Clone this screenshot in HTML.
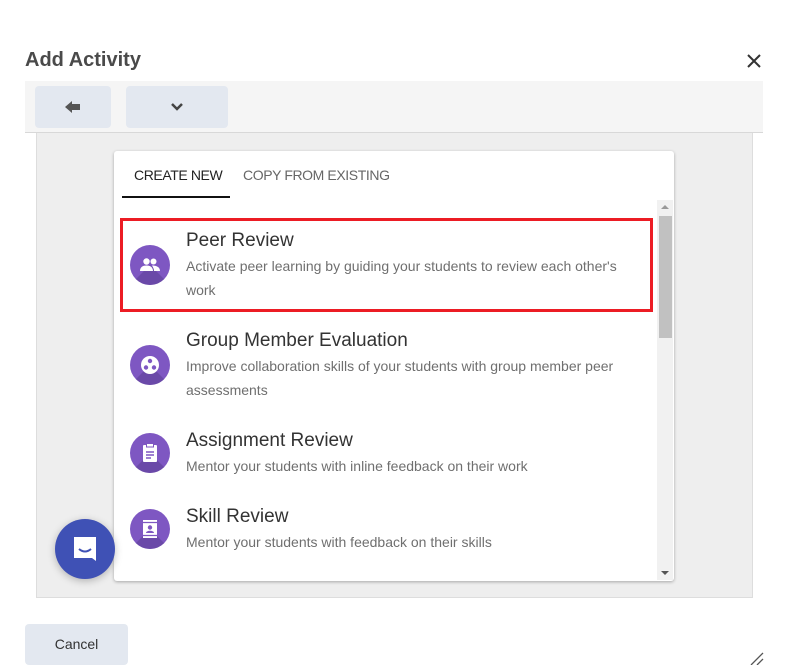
<!DOCTYPE html>
<html><head><style>
body{margin:0;width:785px;height:665px;background:#fff;font-family:"Liberation Sans",sans-serif;position:relative;overflow:hidden}
.a{position:absolute}
.t{font-size:19px;color:#333;left:186px}
.d{font-size:14px;color:#6f6f6f;left:186px;line-height:24px;width:450px}
.ic{left:130px;width:40px;height:40px;border-radius:50%;background:#7e57c2;overflow:hidden}
.ic:after{content:"";position:absolute;left:20px;top:20px;width:40px;height:40px;background:#5e3f96;transform:rotate(45deg);transform-origin:0 0;opacity:.6}
.ic svg{position:absolute;left:9px;top:9px;z-index:1}
</style></head><body>
<div class="a" style="left:25px;top:49px;font-size:20px;font-weight:bold;color:#4a4a4a">Add Activity</div>
<svg class="a" style="left:747px;top:54px" width="14" height="14"><path d="M1 1L13 13M13 1L1 13" stroke="#333" stroke-width="2"/></svg>
<div class="a" style="left:25px;top:81px;width:738px;height:51px;background:#f5f5f5;border-bottom:1px solid #d8d8d8"></div>
<div class="a" style="left:35px;top:86px;width:76px;height:42px;background:#e3e8f0;border-radius:4px"></div>
<svg class="a" style="left:65px;top:101px" width="16" height="12"><path d="M0 6L7 0V3H15V9H7V12Z" fill="#555"/></svg>
<div class="a" style="left:126px;top:86px;width:102px;height:42px;background:#e3e8f0;border-radius:4px"></div>
<svg class="a" style="left:170px;top:103px" width="14" height="9"><path d="M2 1L7 6L12 1" stroke="#444" stroke-width="2.5" fill="none"/></svg>
<div class="a" style="left:36px;top:133px;width:715px;height:464px;background:#eee;border:1px solid #ddd;border-top:none"></div>
<div class="a" style="left:114px;top:151px;width:560px;height:430px;background:#fff;border-radius:3px;box-shadow:0 1px 3px rgba(0,0,0,.3)"></div>
<div class="a" style="left:134px;top:167px;font-size:14px;color:#222;letter-spacing:-.4px">CREATE NEW</div>
<div class="a" style="left:243px;top:167px;font-size:14px;color:#666;letter-spacing:-.4px">COPY FROM EXISTING</div>
<div class="a" style="left:122px;top:196px;width:108px;height:2px;background:#111"></div>
<div class="a" style="left:657px;top:200px;width:16px;height:380px;background:#f1f1f1"></div>
<div class="a" style="left:659px;top:216px;width:13px;height:122px;background:#c1c1c1"></div>
<svg class="a" style="left:661px;top:204px" width="8" height="6"><path d="M0 5L4 1L8 5Z" fill="#999"/></svg>
<svg class="a" style="left:661px;top:570px" width="8" height="6"><path d="M0 1L4 5L8 1Z" fill="#555"/></svg>
<div class="a" style="left:120px;top:218px;width:527px;height:88px;border:3px solid #ec1c24"></div>

<div class="a ic" style="top:245px"><svg width="22" height="22"><circle cx="7.5" cy="7.5" r="3.2" fill="#fff"/><circle cx="14.5" cy="7.5" r="3" fill="#fff"/><path d="M1 17c0-4 3-5.5 6.5-5.5s6.5 1.5 6.5 5.5z M13 11.5c3.5 0 8 1 8 5.5h-6c0-2-1-4-2-5.5z" fill="#fff"/></svg></div>
<div class="a t" style="top:230px">Peer Review</div>
<div class="a d" style="top:254px">Activate peer learning by guiding your students to review each other's work</div>

<div class="a ic" style="top:345px"><svg width="22" height="22"><circle cx="11" cy="11" r="9" fill="#fff"/><circle cx="11" cy="7" r="2.2" fill="#7e57c2"/><circle cx="7" cy="13.5" r="2.2" fill="#7e57c2"/><circle cx="15" cy="13.5" r="2.2" fill="#7e57c2"/></svg></div>
<div class="a t" style="top:330px">Group Member Evaluation</div>
<div class="a d" style="top:354px">Improve collaboration skills of your students with group member peer assessments</div>

<div class="a ic" style="top:433px"><svg width="22" height="22"><rect x="4" y="3" width="14" height="17" rx="1" fill="#fff"/><rect x="7.5" y="1.5" width="7" height="3.5" fill="#fff" stroke="#7e57c2"/><path d="M7 10h8M7 13h8M7 16h5" stroke="#7e57c2" stroke-width="1.6"/></svg></div>
<div class="a t" style="top:430px">Assignment Review</div>
<div class="a d" style="top:454px">Mentor your students with inline feedback on their work</div>

<div class="a ic" style="top:509px"><svg width="22" height="22"><rect x="4" y="2" width="14" height="18" fill="#fff"/><path d="M4 4.5h14M4 17.5h14" stroke="#7e57c2" stroke-width="1.3"/><circle cx="11" cy="9.5" r="2.2" fill="#7e57c2"/><path d="M7 15c0-3 8-3 8 0z" fill="#7e57c2"/></svg></div>
<div class="a t" style="top:506px">Skill Review</div>
<div class="a d" style="top:530px">Mentor your students with feedback on their skills</div>

<div class="a" style="left:55px;top:519px;width:60px;height:60px;border-radius:50%;background:#3f51b5;box-shadow:0 2px 8px rgba(0,0,0,.25)"></div>
<svg class="a" style="left:70px;top:534px" width="30" height="30"><path d="M4 3h22v24l-4-3H4z" fill="#fff"/><path d="M9 15q6 5 12 0" stroke="#3f51b5" stroke-width="2" fill="none"/></svg>

<div class="a" style="left:25px;top:624px;width:103px;height:41px;background:#e3e8f0;border-radius:4px;font-size:14px;color:#333;text-align:center;line-height:40px">Cancel</div>
<svg class="a" style="left:748px;top:652px" width="16" height="13"><path d="M3 13L15 1M9 13L15 7" stroke="#555" stroke-width="1.3"/></svg>
</body></html>
